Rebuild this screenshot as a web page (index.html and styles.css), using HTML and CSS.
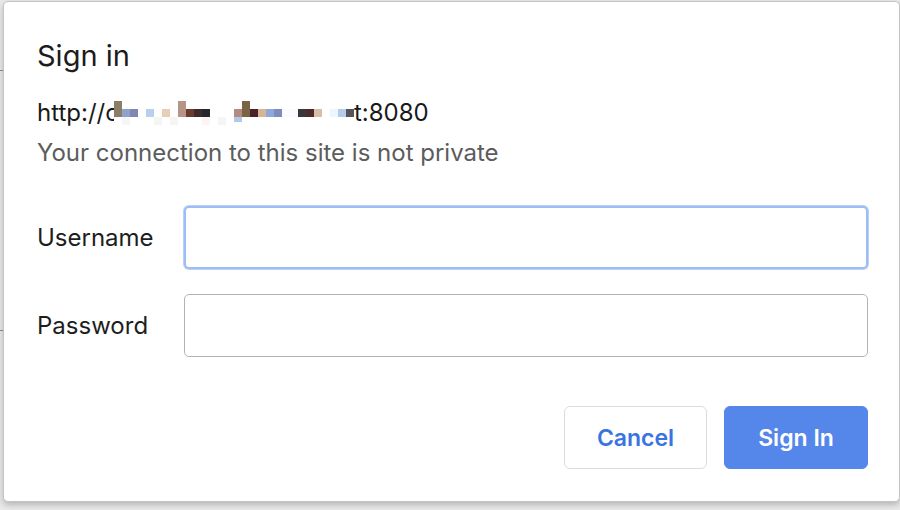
FILE: index.html
```html
<!DOCTYPE html>
<html lang="en">
<head>
<meta charset="utf-8">
<title>Sign in</title>
<link rel="stylesheet" href="styles.css">
</head>
<body>
<div class="page">
  <div class="dialog">
    <h1 class="title">Sign in</h1>
    <div class="info">
      <div class="url">http://c<svg class="mosaic" width="240" height="24" viewBox="0 0 240 24" aria-hidden="true">
        <rect x="0" y="0" width="240" height="24" fill="#fff"/>
        <rect x="0" y="0" width="8" height="16" fill="#8a7e66"/>
        <rect x="8" y="8" width="8" height="8" fill="#8fa2cc"/>
        <rect x="16" y="8" width="8" height="8" fill="#8087b5"/>
        <rect x="32" y="8" width="8" height="8" fill="#b8d0ee"/>
        <rect x="48" y="8" width="8" height="8" fill="#e6cfb5"/>
        <rect x="64" y="0" width="8" height="16" fill="#b89486"/>
        <rect x="72" y="8" width="8" height="8" fill="#6a3a2a"/>
        <rect x="80" y="8" width="8" height="8" fill="#3c2a2c"/>
        <rect x="88" y="8" width="8" height="8" fill="#26262c"/>
        <rect x="8" y="16" width="8" height="8" fill="#f6f6f8"/>
        <rect x="40" y="16" width="8" height="8" fill="#f5f5f5"/>
        <rect x="56" y="16" width="8" height="8" fill="#f5f5f5"/>
        <rect x="88" y="16" width="8" height="8" fill="#fdf5f5"/>
        <rect x="104" y="16" width="8" height="8" fill="#f5f5f5"/>
        <rect x="120" y="8" width="8" height="8" fill="#b58a80"/>
        <rect x="120" y="16" width="8" height="5" fill="#b0c8ea"/>
        <rect x="128" y="0" width="8" height="16" fill="#7a6444"/>
        <rect x="136" y="8" width="8" height="8" fill="#4a2028"/>
        <rect x="144" y="8" width="8" height="8" fill="#d6b494"/>
        <rect x="152" y="8" width="8" height="8" fill="#8fa8d8"/>
        <rect x="160" y="8" width="8" height="8" fill="#7f8bb8"/>
        <rect x="168" y="8" width="16" height="8" fill="#fafbff"/>
        <rect x="184" y="8" width="8" height="8" fill="#38383a"/>
        <rect x="192" y="8" width="8" height="8" fill="#4e2a2c"/>
        <rect x="200" y="8" width="8" height="8" fill="#d8bea6"/>
        <rect x="216" y="8" width="8" height="8" fill="#eef5fc"/>
        <rect x="224" y="8" width="8" height="8" fill="#b4ccec"/>
        <rect x="232" y="8" width="8" height="8" fill="#555558"/>
      </svg>t:8080</div>
      <div class="note">Your connection to this site is not private</div>
    </div>
    <form class="form">
      <label class="label" for="user">Username</label>
      <input class="field focused" id="user" type="text">
      <label class="label" for="pass">Password</label>
      <input class="field" id="pass" type="password">
    </form>
    <div class="actions">
      <button class="btn cancel" type="button">Cancel</button>
      <button class="btn primary" type="button">Sign In</button>
    </div>
  </div>
</div>
</body>
</html>
```

FILE: styles.css
```css
html, body {
  margin: 0;
  padding: 0;
}
body {
  width: 900px;
  height: 510px;
  overflow: hidden;
  background-color: #e9e9e9;
  background-image:
    linear-gradient(#8e8e8e, #8e8e8e),
    linear-gradient(#8e8e8e, #8e8e8e);
  background-size: 4px 1px, 4px 1px;
  background-position: 0 70px, 0 330px;
  background-repeat: no-repeat;
  font-family: "Inter", "Liberation Sans", sans-serif;
}
.page {
  padding: 1px 0 0 3px;
  box-sizing: border-box;
  height: 510px;
}
.dialog {
  box-sizing: border-box;
  width: 897px;
  height: 501px;
  background: #fff;
  border: 1px solid #c4c4c4;
  border-radius: 5px;
  box-shadow: 0 3px 6px rgba(0, 0, 0, 0.22);
  padding: 36px 31px 0 33px;
  display: flex;
  flex-direction: column;
  color: #1e1e1e;
}
.title {
  margin: 0;
  font-size: 29px;
  font-weight: 400;
  line-height: 36px;
  color: #1c1c1c;
}
.info {
  margin-top: 19px;
  font-size: 24px;
  line-height: 40px;
}
.url {
  color: #1a1a1a;
  white-space: nowrap;
}
.mosaic {
  vertical-align: -4px;
  margin-left: -5px;
}
.note {
  color: #5c5c5c;
}
.form {
  margin: 33px 0 0;
  display: grid;
  grid-template-columns: 147px 1fr;
  grid-auto-rows: 63px;
  row-gap: 25px;
  align-items: center;
}
.label {
  font-size: 24px;
  color: #1e1e1e;
}
.field {
  box-sizing: border-box;
  height: 63px;
  width: 100%;
  margin: 0;
  border: 1px solid #b3b3b3;
  border-radius: 5px;
  background: #fff;
  outline: none;
  font: inherit;
}
.field.focused {
  border: 2px solid #9dbef2;
  box-shadow: 0 0 0 1px #b9d1f6;
}
.actions {
  margin-top: 49px;
  display: flex;
  justify-content: flex-end;
  gap: 17px;
}
.btn {
  box-sizing: border-box;
  height: 63px;
  border-radius: 6px;
  font-family: "Inter", "Liberation Sans", sans-serif;
  font-size: 23px;
  font-weight: 600;
  margin: 0;
  padding: 0;
}
.cancel {
  width: 143px;
  background: #fff;
  border: 1px solid #dcdcdc;
  color: #3a74e0;
}
.primary {
  width: 144px;
  background: #5587ea;
  border: 1px solid #5587ea;
  color: #fff;
}
```
